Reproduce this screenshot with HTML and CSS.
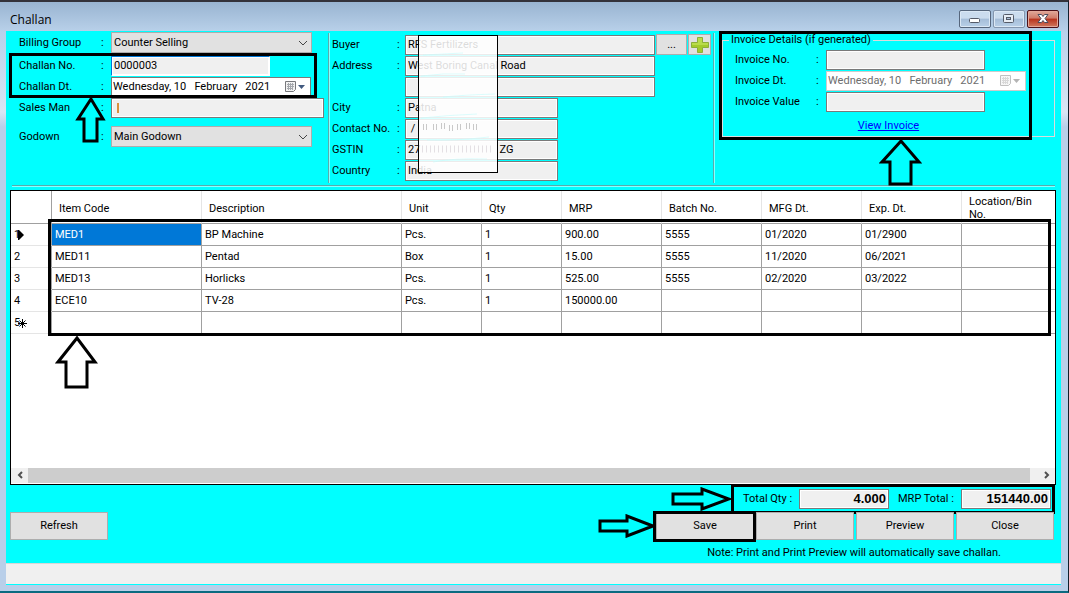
FILE: index.html
```html
<!DOCTYPE html>
<html lang="en">
<head>
  <meta charset="utf-8">
  <title>Challan</title>
  <link rel="stylesheet" href="styles.css">
</head>
<body>
  <div class="window">
    <header class="titlebar">
      <h1>Challan</h1>
      <div class="window-buttons">
        <button type="button" class="win-btn" aria-label="Minimize">
          <svg width="30" height="16" viewBox="0 0 30 16"><rect x="9.500" y="7.500" width="10" height="4" rx="1" fill="#fff" stroke="#555b68"/></svg>
        </button>
        <button type="button" class="win-btn dim" aria-label="Maximize">
          <svg width="30" height="16" viewBox="0 0 30 16"><rect x="9.500" y="3.500" width="10" height="8" rx="1" fill="#e6edf5" stroke="#555b68"/><rect x="12.500" y="6.500" width="4" height="2" fill="#a9bfd8" stroke="#555b68"/></svg>
        </button>
        <button type="button" class="win-btn win-close" aria-label="Close window">
          <svg width="30" height="16" viewBox="0 0 30 16"><path d="M10 3.500h3.500L15 5.500l1.500-2H20L17 7.500l3 4h-3.500L15 9.500l-1.500 2H10l3-4z" fill="#fff" stroke="#4d4c5c"/></svg>
        </button>
      </div>
    </header>

    <main class="client">
      <section class="panels">
        <div class="panel panel-challan">
          <div class="row">
            <label for="billing">Billing Group</label><span class="colon">:</span>
            <div class="combo">
              <select id="billing"><option>Counter Selling</option></select>
              <svg width="10" height="6" viewBox="0 0 10 6"><path d="M1 1l4 4 4-4" fill="none" stroke="#444"/></svg>
            </div>
          </div>
          <div class="marked">
            <div class="row">
              <label for="challanNo">Challan No.</label><span class="colon">:</span>
              <input type="text" id="challanNo" class="field short focused" value="0000003">
            </div>
            <div class="row">
              <label for="challanDt">Challan Dt.</label><span class="colon">:</span>
              <div class="date">
                <input type="text" id="challanDt" value="Wednesday, 10   February   2021">
                <button type="button" aria-label="Pick challan date">
                  <svg width="20" height="13" viewBox="0 0 20 13"><path d="M.5 1.500h10v8l-2 2h-8z" fill="#f2f2f2" stroke="#77787c"/><path d="M2 4.500h7M2 6.500h7M2 8.500h6M3.500 3v7M5.500 3v7M7.500 3v7" stroke="#a5a8ad"/><path d="M13 5h7l-3.500 4z" fill="#41597f"/></svg>
                </button>
              </div>
            </div>
            <span class="callout callout-challan"></span>
            <svg class="arrow arrow-challan" width="32" height="48" viewBox="0 0 32 48"><path d="M16 3L3 23h6v22h13V23h6z"/></svg>
          </div>
          <div class="row">
            <label for="salesMan">Sales Man</label><span class="colon">:</span>
            <div class="field sales">
              <span class="caret"></span>
              <input type="text" id="salesMan">
            </div>
          </div>
          <div class="row row-godown">
            <label for="godown">Godown</label><span class="colon">:</span>
            <div class="combo">
              <select id="godown"><option>Main Godown</option></select>
              <svg width="10" height="6" viewBox="0 0 10 6"><path d="M1 1l4 4 4-4" fill="none" stroke="#444"/></svg>
            </div>
          </div>
        </div>

        <div class="panel panel-buyer">
          <div class="row">
            <label for="buyer">Buyer</label><span class="colon">:</span>
            <input type="text" id="buyer" class="field long" value="RFS Fertilizers">
            <button type="button" class="btn btn-small" aria-label="Find buyer">...</button>
            <button type="button" class="btn btn-add" aria-label="Add buyer">
              <svg width="18" height="16" viewBox="0 0 18 16"><path d="M6.500.5h5v5h6v5h-6v5h-5v-5h-6v-5h6z" fill="#a4cb2c" stroke="#8caf3a"/><path d="M7 1h4v5h6v2H1V6h6z" fill="#b9dc4b"/></svg>
            </button>
          </div>
          <div class="row">
            <label for="address">Address</label><span class="colon">:</span>
            <input type="text" id="address" class="field long" value="West Boring Canal Road">
          </div>
          <div class="row">
            <span class="label"></span><span class="colon"></span>
            <input type="text" class="field long" aria-label="Address line 2">
          </div>
          <div class="row">
            <label for="city">City</label><span class="colon">:</span>
            <input type="text" id="city" class="field short" value="Patna">
          </div>
          <div class="row">
            <label for="contact">Contact No.</label><span class="colon">:</span>
            <input type="text" id="contact" class="field short" value=" /">
          </div>
          <div class="row">
            <label for="gstin">GSTIN</label><span class="colon">:</span>
            <input type="text" id="gstin" class="field short" value="27                             ZG">
          </div>
          <div class="row">
            <label for="country">Country</label><span class="colon">:</span>
            <input type="text" id="country" class="field short" value="India">
          </div>
          <!-- masks the private details of the buyer -->
          <div class="mask">
            <svg width="78" height="136" viewBox="0 0 78 136" fill="none">
              <path d="M4 19q20-1 40-2M2 40q22-3 44-2M24 61q20-2 52-3M2 82q30-3 56-4M8 104q28 1 62-3M14 126q20-4 54-3" stroke="#c4fbfb" opacity=".6"/>
              <path d="M4 91h6M14 91h5M22 90h5M30 92h5M38 91h6M47 90h4M54 91h6" stroke="#c9c9c9" stroke-width="6" stroke-dasharray="1 2"/>
              <path d="M3 113h72" stroke="#e4e0e4" stroke-width="7" stroke-dasharray="1 3"/>
            </svg>
          </div>
        </div>

        <div class="panel panel-invoice">
          <fieldset>
            <legend>Invoice Details (if generated)</legend>
            <div class="row">
              <label for="invoiceNo">Invoice No.</label><span class="colon">:</span>
              <input type="text" id="invoiceNo" class="field short">
            </div>
            <div class="row">
              <label for="invoiceDt">Invoice Dt.</label><span class="colon">:</span>
              <div class="date disabled">
                <input type="text" id="invoiceDt" value="Wednesday, 10   February   2021" disabled>
                <button type="button" aria-label="Pick invoice date" disabled>
                  <svg width="20" height="13" viewBox="0 0 20 13"><path d="M.5 1.500h10v8l-2 2h-8z" fill="#f6f6f6" stroke="#c0c0c0"/><path d="M2 4.500h7M2 6.500h7M2 8.500h6M3.500 3v7M5.500 3v7M7.500 3v7" stroke="#d8d8d8"/><path d="M13 5h7l-3.500 4z" fill="#b4b4b4"/></svg>
                </button>
              </div>
            </div>
            <div class="row">
              <label for="invoiceValue">Invoice Value</label><span class="colon">:</span>
              <input type="text" id="invoiceValue" class="field short">
            </div>
            <a href="#" class="view-link">View Invoice</a>
          </fieldset>
          <span class="callout callout-invoice"></span>
          <svg class="arrow arrow-invoice" width="44" height="50" viewBox="0 0 44 50"><path d="M22 3L3 24h8v22h21V24h8z"/></svg>
        </div>
      </section>

      <section class="grid">
        <div class="grid-body">
          <table>
            <colgroup>
              <col class="c-head"><col class="c-code"><col class="c-desc"><col class="c-small"><col class="c-small">
              <col class="c-mid"><col class="c-mid"><col class="c-mid"><col class="c-mid"><col>
            </colgroup>
            <thead>
              <tr>
                <th></th><th>Item Code</th><th>Description</th><th>Unit</th><th>Qty</th><th>MRP</th>
                <th>Batch No.</th><th>MFG Dt.</th><th>Exp. Dt.</th><th><span class="wrap">Location/Bin No.</span></th>
              </tr>
            </thead>
            <tbody>
              <tr>
                <th>1<svg class="current-row" width="6" height="10" viewBox="0 0 6 10"><path d="M0 0h1l5 5-5 5H0z"/></svg></th>
                <td class="selected">MED1</td><td>BP Machine</td><td>Pcs.</td><td>1</td><td>900.00</td><td>5555</td><td>01/2020</td><td>01/2900</td><td></td>
              </tr>
              <tr>
                <th>2</th><td>MED11</td><td>Pentad</td><td>Box</td><td>1</td><td>15.00</td><td>5555</td><td>11/2020</td><td>06/2021</td><td></td>
              </tr>
              <tr>
                <th>3</th><td>MED13</td><td>Horlicks</td><td>Pcs.</td><td>1</td><td>525.00</td><td>5555</td><td>02/2020</td><td>03/2022</td><td></td>
              </tr>
              <tr>
                <th>4</th><td>ECE10</td><td>TV-28</td><td>Pcs.</td><td>1</td><td>150000.00</td><td></td><td></td><td></td><td></td>
              </tr>
              <tr>
                <th>5<svg class="new-row" width="9" height="9" viewBox="0 0 9 9"><path d="M4.500 0v9M0 4.500h9M1.500 1.500l6 6M7.500 1.500l-6 6" stroke="#000"/></svg></th>
                <td></td><td></td><td></td><td></td><td></td><td></td><td></td><td></td><td></td>
              </tr>
            </tbody>
          </table>
          <span class="callout callout-items"></span>
          <svg class="arrow arrow-items" width="44" height="56" viewBox="0 0 44 56"><path d="M22 3L3 27h8v25h21V27h8z"/></svg>
        </div>
        <div class="scrollbar">
          <button type="button" aria-label="Scroll left"><svg width="8" height="8" viewBox="0 0 8 8"><path d="M6 1L3 4l3 3" fill="none" stroke="#505050" stroke-width="2"/></svg></button>
          <span class="thumb"></span>
          <button type="button" aria-label="Scroll right"><svg width="8" height="8" viewBox="0 0 8 8"><path d="M2 1l3 3-3 3" fill="none" stroke="#505050" stroke-width="2"/></svg></button>
        </div>
      </section>

      <section class="totals">
        <svg class="arrow-flow" width="60" height="24" viewBox="0 0 60 24"><path d="M2 7h29V2l27 10-27 10v-5H2z"/></svg>
        <div class="totals-box">
          <label for="totalQty">Total Qty :</label>
          <input type="text" id="totalQty" class="field" value="4.000">
          <label for="mrpTotal">MRP Total :</label>
          <input type="text" id="mrpTotal" class="field" value="151440.00">
        </div>
      </section>

      <section class="actions">
        <button type="button" class="btn">Refresh</button>
        <div class="actions-right">
          <svg class="arrow-flow" width="56" height="24" viewBox="0 0 56 24"><path d="M2 7h27V2l26 10-26 10v-5H2z"/></svg>
          <div class="save-wrap">
            <button type="button" class="btn">Save</button>
            <span class="callout callout-save"></span>
          </div>
          <button type="button" class="btn">Print</button>
          <button type="button" class="btn">Preview</button>
          <button type="button" class="btn">Close</button>
        </div>
      </section>
      <p class="note">Note: Print and Print Preview will automatically save challan.</p>
      <footer class="statusbar"></footer>
    </main>
  </div>
</body>
</html>
```

FILE: styles.css
```css
* {
  box-sizing: border-box;
}

body {
  margin: 0;
  font-family: Roboto, "Liberation Sans", sans-serif;
  font-size: 11px;
  line-height: 14px;
  color: #000;
}

input, select, button {
  font: inherit;
  color: inherit;
}

.window {
  display: flex;
  flex-direction: column;
  min-height: 100vh;
  padding: 0 7px 6px 6px;
  border-top: 2px solid #33323a;
  border-right: 1px solid #12202c;
  border-bottom: 2px solid #0b6a80;
  background: linear-gradient(#99b4d1 0, #b9d1ea 30px, #d9e6f4 110px, #b9cfe9 125px);
}

.titlebar {
  display: flex;
  justify-content: space-between;
  height: 29px;
}

.titlebar h1 {
  margin: 11px 0 0 4px;
  font: 12px/14px "Open Sans", "Noto Sans", sans-serif;
}

.window-buttons {
  display: flex;
  gap: 2px;
  padding: 8px 2px 0 0;
}

.win-btn {
  width: 32px;
  height: 18px;
  padding: 0;
  border: 1px solid #56667c;
  border-radius: 2px;
  background: linear-gradient(#cbdcee 45%, #a5bdd8 50%, #b9d0e8);
  box-shadow: inset 0 0 0 1px #dbe8f5;
}

.win-btn svg {
  display: block;
}

.dim {
  border-color: #8496ae;
}

.win-close {
  border-color: #4c1118;
  background: linear-gradient(#e0a99a 0, #d07a68 45%, #b8321c 50%, #d07a60);
  box-shadow: inset 0 0 0 1px #e3a799;
}

.client {
  display: flex;
  flex: 1;
  flex-direction: column;
  background: #0ff;
  border-bottom: 1px solid #0ff;
}

/* top panels */
.panels {
  display: flex;
  height: 156px;
  margin: 0 6px;
  border-bottom: 2px groove #8ff;
}

.panel {
  position: relative;
  margin-bottom: 2px;
}

.panel-challan {
  flex: 0 0 316px;
  padding: 1px 0 0 7px;
}

.panel-buyer {
  flex: 0 0 387px;
  padding: 1px 0 0 2px;
  margin-top: 2px;
  border-left: 2px groove #8ff;
  border-right: 2px groove #8ff;
}

.panel-invoice {
  flex: 1;
  padding: 2px 0 0 7px;
}

.row {
  display: flex;
  align-items: center;
  height: 21px;
}

.row label, .label {
  width: 82px;
}

.colon {
  width: 10px;
}

.panel-buyer .row label, .panel-buyer .label {
  width: 65px;
}

.panel-buyer .colon {
  width: 8px;
}

.field {
  height: 20px;
  padding: 0 2px;
  border: 1px solid #7a7a7a;
  background: #f0f0f0;
  box-shadow: inset 0 0 0 1px #fff;
}

.short {
  width: 159px;
}

.panel-buyer .short {
  width: 153px;
}

.long {
  width: 250px;
}

.focused {
  border-color: #fff;
  border-top-color: #0078d7;
  border-left-color: #0078d7;
}

.combo {
  position: relative;
  width: 201px;
  height: 21px;
}

.combo select {
  width: 100%;
  height: 100%;
  padding: 0 2px;
  border: 1px solid #adadad;
  border-radius: 0;
  background: #e1e1e1;
  appearance: none;
}

.combo svg {
  position: absolute;
  top: 8px;
  right: 4px;
  pointer-events: none;
}

.date {
  display: flex;
  align-items: center;
  width: 200px;
  height: 20px;
  border: 1px solid #7a7a7a;
  background: #fff;
}

.date input {
  flex: 1;
  min-width: 0;
  padding: 0 1px;
  border: 0;
  background: none;
}

.date button {
  height: 18px;
  padding: 2px 5px;
  border: 0;
  background: none;
}

.disabled {
  border-color: #ccc;
  color: #6d6d6d;
}

.marked {
  position: relative;
  padding-top: 2px;
}

.sales {
  display: flex;
  align-items: center;
  width: 213px;
}

.sales input {
  flex: 1;
  min-width: 0;
  border: 0;
  background: none;
}

.caret {
  width: 2px;
  height: 10px;
  margin-left: 3px;
  background: #d9903c;
}

.row-godown {
  margin-top: 8px;
}

.panel-buyer .btn-small {
  width: 31px;
  height: 21px;
  margin-left: 1px;
}

.panel-buyer .btn-add {
  width: 23px;
  height: 21px;
  margin-left: 1px;
}

.btn-add svg {
  display: block;
  margin: auto;
}

.mask {
  position: absolute;
  top: 2px;
  left: 88px;
  width: 80px;
  height: 138px;
  border: 1px solid #000;
  background: rgba(255, 255, 255, .86);
}

fieldset {
  height: 104px;
  margin: 0;
  padding: 2px 0 0 12px;
  border: 1px solid #dcdcdc;
}

legend {
  margin-left: -6px;
  padding: 0 2px;
}

.panel-invoice .row label {
  width: 81px;
}

.view-link {
  display: block;
  width: 307px;
  margin-top: 7px;
  text-align: center;
  color: #00f;
}

/* item grid */
.grid {
  display: flex;
  flex: 1;
  flex-direction: column;
  margin: 3px 5px 0 4px;
  border: 1px solid #000;
  background: #fff;
}

.grid-body {
  position: relative;
  flex: 1;
}

table {
  width: 100%;
  table-layout: fixed;
  border-collapse: separate;
  border-spacing: 0;
}

.c-head {
  width: 41px;
}

.c-code {
  width: 150px;
}

.c-desc {
  width: 200px;
}

.c-small {
  width: 80px;
}

.c-mid {
  width: 100px;
}

th, td {
  height: 22px;
  padding: 1px 3px 0;
  border-right: 1px solid #a0a0a0;
  border-bottom: 1px solid #a0a0a0;
  font-weight: normal;
  text-align: left;
  white-space: nowrap;
}

thead th {
  height: 33px;
  padding: 2px 7px 0;
  border-right-color: #e5e5e5;
  line-height: 13px;
}

tbody th {
  border-bottom-color: #e5e5e5;
}

thead th:first-child {
  border-right-color: #a0a0a0;
}

th:last-child, td:last-child {
  border-right: 0;
}

.wrap {
  display: block;
  width: 70px;
  white-space: normal;
}

th svg {
  vertical-align: middle;
}

.new-row, .current-row {
  margin-left: -2px;
}

.selected {
  background: #0078d7;
  color: #fff;
}

.scrollbar {
  display: flex;
  height: 16px;
  border-bottom: 1px solid #fff;
  background: #f0f0f0;
}

.scrollbar button {
  width: 17px;
  padding: 0;
  border: 0;
  background: none;
}

.scrollbar button:last-child {
  width: 25px;
  padding-left: 8px;
}

.thumb {
  flex: 1;
  background: #cdcdcd;
}

/* totals and buttons */
.totals {
  display: flex;
  justify-content: flex-end;
  align-items: center;
  height: 27px;
  margin-right: 6px;
}

.totals-box {
  display: flex;
  align-items: center;
  width: 324px;
  height: 30px;
  padding: 0 1px 0 9px;
  border: 3px solid #000;
}

.totals-box .field {
  width: 90px;
  font-family: "Liberation Sans", Arial, sans-serif;
  font-size: 13px;
  font-weight: bold;
  text-align: right;
}

.totals-box label {
  width: 63px;
}

.totals-box label:first-child {
  width: 56px;
}

.totals-box label:nth-of-type(2) {
  margin-left: 9px;
}

.actions {
  display: flex;
  justify-content: space-between;
  align-items: center;
  margin: 0 7px 0 4px;
}

.actions-right {
  display: flex;
  align-items: center;
  gap: 2px;
}

.btn {
  width: 98px;
  height: 28px;
  padding: 0;
  border: 1px solid #adadad;
  background: #e1e1e1;
}

.save-wrap {
  position: relative;
}

.note {
  margin: 6px 60px 3px 0;
  text-align: right;
}

.statusbar {
  height: 21px;
  border-top: 1px solid #d7d7d7;
  background: #f0f0f0;
}

/* highlight boxes and arrows */
.callout {
  position: absolute;
  border: 3px solid #000;
  pointer-events: none;
}

.callout-challan {
  top: 0;
  left: -10px;
  width: 308px;
  height: 45px;
}

.callout-invoice {
  top: 0;
  left: 4px;
  right: 23px;
  height: 109px;
}

.callout-items {
  top: 28px;
  left: 37px;
  right: 4px;
  height: 117px;
}

.callout-save {
  inset: -1px -2px -2px -3px;
}

.arrow {
  position: absolute;
  z-index: 1;
  pointer-events: none;
}

.arrow path, .arrow-flow path {
  fill: none;
  stroke: #000;
  stroke-width: 3;
}

.arrow-challan {
  top: 43px;
  left: 56px;
}

.arrow-invoice {
  top: 107px;
  left: 164px;
}

.arrow-items {
  top: 144px;
  left: 44px;
}
```
